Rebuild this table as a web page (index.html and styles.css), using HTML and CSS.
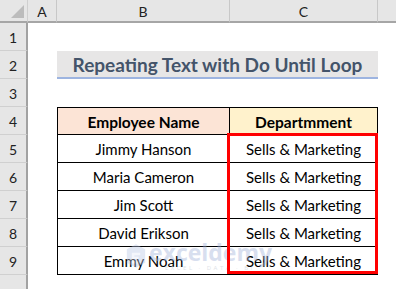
FILE: index.html
```html
<!DOCTYPE html>
<html>
<head>
<meta charset="utf-8">
<link rel="stylesheet" href="styles.css">
</head>
<body>
<div class="sheet">
  <div class="corner"><span class="tri"></span></div>
  <div class="colhead">A</div>
  <div class="colhead">B</div>
  <div class="colhead">C</div>
  <div class="colhead last"></div>

  <div class="rowhead r1">1</div>
  <div class="rowhead r2">2</div>
  <div class="rowhead r3">3</div>
  <div class="rowhead r4">4</div>
  <div class="rowhead r5">5</div>
  <div class="rowhead r6">6</div>
  <div class="rowhead r7">7</div>
  <div class="rowhead r8">8</div>
  <div class="rowhead r9">9</div>
  <div class="rowhead r10"></div>

  <div class="title">Repeating Text with Do Until Loop</div>

  <div class="cell th name r4">Employee Name</div>
  <div class="cell th dept r4">Departmment</div>

  <div class="cell name r5">Jimmy Hanson</div>
  <div class="cell dept r5">Sells &amp; Marketing</div>
  <div class="cell name r6">Maria Cameron</div>
  <div class="cell dept r6">Sells &amp; Marketing</div>
  <div class="cell name r7">Jim Scott</div>
  <div class="cell dept r7">Sells &amp; Marketing</div>
  <div class="cell name r8">David Erikson</div>
  <div class="cell dept r8">Sells &amp; Marketing</div>
  <div class="cell name r9">Emmy Noah</div>
  <div class="cell dept r9">Sells &amp; Marketing</div>

  <div class="highlight"></div>

  <div class="watermark">
    <svg class="wm-icon" width="20" height="26" viewBox="0 0 24 30">
      <path d="M12 1 L23 7 L23 23 L12 29 L1 23 L1 7 Z" fill="#b8c6e6"/>
      <path d="M7 11 L17 11 L17 14 L10 14 L10 16 L15 16 L15 19 L10 19 L10 21 L17 21 L17 24 L7 24 Z" fill="#e4eaf6"/>
    </svg>
    <div class="wm-text">
      <span class="wm-name">exceldemy</span>
      <span class="wm-sub">EXCEL · DATA · BI</span>
    </div>
  </div>
</div>
</body>
</html>
```
FILE: styles.css
```css
html, body {
  margin: 0;
  padding: 0;
  background: #ffffff;
}

.sheet {
  position: relative;
  display: grid;
  grid-template-columns: 28px 29px 173px 148px 18px;
  grid-template-rows: 23px repeat(10, 28px);
  width: 396px;
  height: 289px;
  overflow: hidden;
  font-family: Lato, "Open Sans", sans-serif;
}

.corner {
  grid-row: 1;
  grid-column: 1;
  background: #e6e6e6;
  border-bottom: 2px solid #a6a6a6;
  border-right: 1px solid #cfcfcf;
  box-sizing: border-box;
  position: relative;
}

.tri {
  position: absolute;
  right: 3px;
  bottom: 3px;
  width: 0;
  height: 0;
  border-left: 13px solid transparent;
  border-bottom: 13px solid #bcbcbc;
}

.colhead {
  grid-row: 1;
  background: #e6e6e6;
  border-bottom: 2px solid #a6a6a6;
  border-right: 1px solid #c8c8c8;
  box-sizing: border-box;
  display: flex;
  align-items: center;
  justify-content: center;
  font-size: 14px;
  color: #222;
  padding-top: 1px;
}

.colhead.last {
  border-right: none;
}

.rowhead {
  grid-column: 1;
  background: #e6e6e6;
  border-right: 2px solid #a2a2a2;
  border-bottom: 1px solid #d0d0d0;
  box-sizing: border-box;
  display: flex;
  align-items: center;
  justify-content: center;
  font-size: 14px;
  color: #222;
  padding-top: 2px;
}

.r1 { grid-row: 2; }
.r2 { grid-row: 3; }
.r3 { grid-row: 4; }
.r4 { grid-row: 5; }
.r5 { grid-row: 6; }
.r6 { grid-row: 7; }
.r7 { grid-row: 8; }
.r8 { grid-row: 9; }
.r9 { grid-row: 10; }
.r10 { grid-row: 11; }

.title {
  grid-row: 3;
  grid-column: 3 / 5;
  background: #e7e6e6;
  border-bottom: 2px solid #9db4e0;
  box-sizing: border-box;
  display: flex;
  align-items: center;
  justify-content: center;
  font-weight: bold;
  font-size: 19px;
  color: #44546a;
  padding-top: 1px;
}

.cell {
  box-sizing: border-box;
  display: flex;
  align-items: center;
  justify-content: center;
  font-size: 15px;
  color: #000;
  border-right: 1px solid #000;
  border-bottom: 1px solid #000;
  padding-top: 1px;
}

.cell.name {
  grid-column: 3;
  border-left: 1px solid #000;
}

.cell.dept {
  grid-column: 4;
}

.cell.th {
  border-top: 1px solid #000;
  font-weight: bold;
  font-size: 15.5px;
}

.cell.th.name {
  background: #fce4d6;
}

.cell.th.dept {
  background: #fff2cc;
}

.highlight {
  grid-column: 4;
  grid-row: 6 / 11;
  border: 3px solid #ff0000;
  margin: -2px 0 1px -3px;
  z-index: 2;
}

.watermark {
  position: absolute;
  left: 126px;
  top: 240px;
  display: flex;
  align-items: flex-start;
  gap: 3px;
  opacity: 0.4;
  z-index: 1;
  pointer-events: none;
}

.wm-icon {
  margin-top: 3px;
}

.wm-text {
  display: flex;
  flex-direction: column;
}

.wm-name {
  font-family: "Open Sans", sans-serif;
  font-weight: bold;
  font-size: 23px;
  line-height: 24px;
  color: #9fb0d8;
}

.wm-sub {
  font-family: "Open Sans", sans-serif;
  font-size: 6px;
  line-height: 8px;
  letter-spacing: 2.5px;
  color: #b0b8c8;
  margin-left: 16px;
}
```
